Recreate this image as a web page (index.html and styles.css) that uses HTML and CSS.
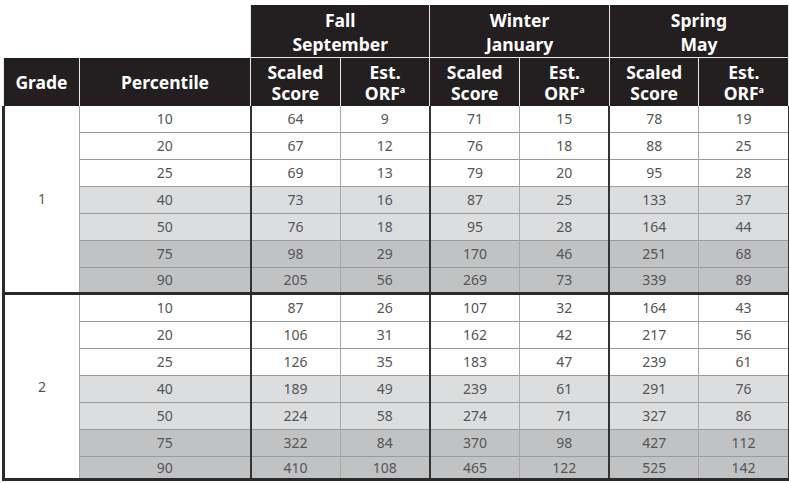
FILE: index.html
```html
<!DOCTYPE html>
<html>
<head>
<meta charset="utf-8">
<link rel="stylesheet" href="styles.css">
</head>
<body>
<table class="norms">
  <colgroup>
    <col class="c-grade"><col class="c-pct">
    <col class="c-val"><col class="c-val">
    <col class="c-val"><col class="c-val">
    <col class="c-val"><col class="c-val">
  </colgroup>
  <thead>
    <tr class="h1">
      <th class="blank" colspan="2"></th>
      <th class="season" colspan="2">Fall<br>September</th>
      <th class="season" colspan="2">Winter<br>January</th>
      <th class="season" colspan="2">Spring<br>May</th>
    </tr>
    <tr class="h2">
      <th class="lead">Grade</th>
      <th>Percentile</th>
      <th>Scaled<br>Score</th><th>Est.<br>ORF<sup>a</sup></th>
      <th>Scaled<br>Score</th><th>Est.<br>ORF<sup>a</sup></th>
      <th>Scaled<br>Score</th><th>Est.<br>ORF<sup>a</sup></th>
    </tr>
  </thead>
  <tbody id="g1"></tbody>
  <tbody id="g2"></tbody>
</table>
<script src="app.js"></script>
</body>
</html>
```
FILE: app.js
```js
const data = {
  g1: [[10,64,9,71,15,78,19],[20,67,12,76,18,88,25],[25,69,13,79,20,95,28],[40,73,16,87,25,133,37],[50,76,18,95,28,164,44],[75,98,29,170,46,251,68],[90,205,56,269,73,339,89]],
  g2: [[10,87,26,107,32,164,43],[20,106,31,162,42,217,56],[25,126,35,183,47,239,61],[40,189,49,239,61,291,76],[50,224,58,274,71,327,86],[75,322,84,370,98,427,112],[90,410,108,465,122,525,142]]
};
const shade = ["w","w","w","l","l","d","d"];
["g1","g2"].forEach((id, gi) => {
  const tb = document.getElementById(id);
  data[id].forEach((row, i) => {
    const tr = document.createElement("tr");
    tr.className = shade[i];
    if (i === 0) {
      const g = document.createElement("td");
      g.className = "grade";
      g.rowSpan = 7;
      g.textContent = String(gi + 1);
      tr.appendChild(g);
    }
    row.forEach((v, j) => {
      const td = document.createElement("td");
      td.textContent = v;
      if (j === 1 || j === 3 || j === 5) td.className = "start";
      tr.appendChild(td);
    });
    tb.appendChild(tr);
  });
});
```
FILE: styles.css
```css
html, body { margin: 0; padding: 0; background: #fff; }
body { font-family: "Noto Sans", "Open Sans", sans-serif; }

.norms {
  border-collapse: collapse;
  table-layout: fixed;
  width: 785px;
  margin: 5px 0 0 2px;
}
.c-grade { width: 76px; }
.c-pct { width: 171px; }
.c-val { width: 89.7px; }

.norms th {
  background: #231f20;
  color: #fff;
  font-weight: 700;
  font-size: 17.5px;
  line-height: 21px;
  padding: 0;
  text-align: center;
  border: 1px solid #e8e8e8;
  border-top: none;
}
.norms th sup { font-size: 9px; vertical-align: 7px; line-height: 0; }
.norms .h1 th { height: 51px; line-height: 24px; border-bottom: 1px solid #e8e8e8; padding-top: 1px; }
.norms .h1 th.blank { background: #fff; border: none; }
.norms .h2 th { height: 47px; border-bottom: none; padding-top: 1px; }

.norms td {
  height: 26px;
  padding: 0;
  text-align: center;
  font-size: 14px;
  line-height: 18px;
  color: #555;
  border-top: 1px solid #9a9a9a;
  border-left: 1px solid #a8a8a8;
}
.norms tbody tr:last-child td { height: 24px; border-bottom: 3px solid #2a2a2a; }
.norms #g2 tr:last-child td { height: 21px; }
.norms td.start { border-left: 2px solid #333; }
.norms td.grade { background: #fff; border-left: 3px solid #2a2a2a; border-top: none; border-bottom: 3px solid #2a2a2a; }
.norms td:last-child { border-right: 2px solid #333; }
.norms tr.w td { background: #fff; }
.norms tr.l td { background: #dcdddf; }
.norms tr.d td { background: #c1c2c4; }
.norms tr td.grade { background: #fff; }
.norms tbody tr:first-child td { border-top: none; }
```
